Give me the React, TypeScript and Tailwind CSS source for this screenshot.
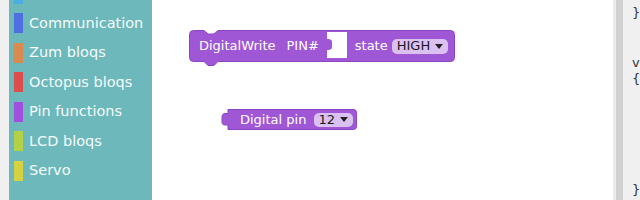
import React from 'react'

const categories = [
  { label: '', color: 'bg-[#4aaee0]' },
  { label: 'Communication', color: 'bg-[#4f6ee0]' },
  { label: 'Zum bloqs', color: 'bg-[#d98a4f]' },
  { label: 'Octopus bloqs', color: 'bg-[#dc4d4b]' },
  { label: 'Pin functions', color: 'bg-[#a04fdf]' },
  { label: 'LCD bloqs', color: 'bg-[#b2d146]' },
  { label: 'Servo', color: 'bg-[#d6d141]' },
]

const font = { fontFamily: '"DejaVu Sans", "Noto Sans", sans-serif' }

const Caret = () => (
  <svg width="8" height="5" viewBox="0 0 8 5" className="ml-[5px]">
    <path d="M0,0 H8 L4,5 Z" fill="#222" />
  </svg>
)

const DigitalWriteBlock = () => (
  <div className="absolute left-[37px] top-[30px] h-[32px] w-[266px]">
    <svg width="266" height="37" viewBox="0 0 266 37" className="absolute left-0 top-0">
      <path
        d="M0.5,4.5 Q0.5,0.5 4.5,0.5 H15 L19,4 H25 L29,0.5 H261.5 Q265.5,0.5 265.5,4.5 V27.5 Q265.5,31.5 261.5,31.5 H29 L25,35.5 H19 L15,31.5 H4.5 Q0.5,31.5 0.5,27.5 Z"
        fill="#a057d6"
        stroke="#8b45c0"
      />
      <path
        d="M138,2 H158 V28 H138 V20 C142,20 143,19 143,17 V12 C143,10 142,9 138,9 Z"
        fill="#ffffff"
      />
    </svg>
    <div className="relative flex h-[32px] items-center text-[13px] text-white" style={font}>
      <span className="ml-[10px]">DigitalWrite</span>
      <span className="ml-[11px]">PIN#</span>
      <span className="ml-[36px]">state</span>
      <span className="ml-[4px] flex h-[15px] items-center rounded-[5px] bg-[#dbc1f1] pl-[5px] pr-[5px] text-[#1a1a1a]">
        HIGH
        <Caret />
      </span>
    </div>
  </div>
)

const DigitalPinBlock = () => (
  <div className="absolute left-[69px] top-[109px] h-[21px] w-[136px]">
    <svg width="136" height="21" viewBox="0 0 136 21" className="absolute left-0 top-0">
      <path
        d="M7,0.5 H132.5 Q135.5,0.5 135.5,3.5 V17.5 Q135.5,20.5 132.5,20.5 H7 V16 H4 C2,16 1,15 1,13 V8 C1,6 2,4.5 4,4.5 H7 Z"
        fill="#a057d6"
        stroke="#8b45c0"
      />
    </svg>
    <div className="relative flex h-[21px] items-center text-[13px] text-white" style={font}>
      <span className="ml-[19px]">Digital pin</span>
      <span className="ml-[8px] flex h-[14px] items-center rounded-[5px] bg-[#dbc1f1] pl-[4px] pr-[5px] text-[#1a1a1a]">
        12
        <Caret />
      </span>
    </div>
  </div>
)

export default function App() {
  return (
    <div className="flex h-[200px] w-[640px] overflow-hidden bg-white">
      <div className="w-[9px] shrink-0 bg-[#f0f0f0]" />
      <div className="w-[143px] shrink-0 overflow-hidden bg-[#6cb8bb]">
        <ul className="mt-[-21.25px]">
          {categories.map((c, i) => (
            <li key={i} className="flex h-[29.5px] items-center">
              <span className={`ml-[5px] h-[20px] w-[9px] ${c.color}`} />
              <span className="ml-[6px] pt-[1px] text-[14.5px] text-[#f6fbfb]" style={font}>
                {c.label}
              </span>
            </li>
          ))}
        </ul>
      </div>
      <div className="relative flex-1 bg-white">
        <DigitalWriteBlock />
        <DigitalPinBlock />
      </div>
      <div className="w-[3px] shrink-0 bg-[#ececec]" />
      <div className="w-[7px] shrink-0 bg-[#d1d1d1]" />
      <div
        className="relative w-[17px] shrink-0 bg-[#f0f0f0] text-[13px] leading-none text-[#333]"
        style={{ fontFamily: '"DejaVu Sans", sans-serif' }}
      >
        <span className="absolute left-[9px] top-[6px]">{'}'}</span>
        <span className="absolute left-[9px] top-[56px]">v</span>
        <span className="absolute left-[9px] top-[72px]">{'{'}</span>
        <span className="absolute left-[9px] top-[183px]">{'}'}</span>
      </div>
    </div>
  )
}
